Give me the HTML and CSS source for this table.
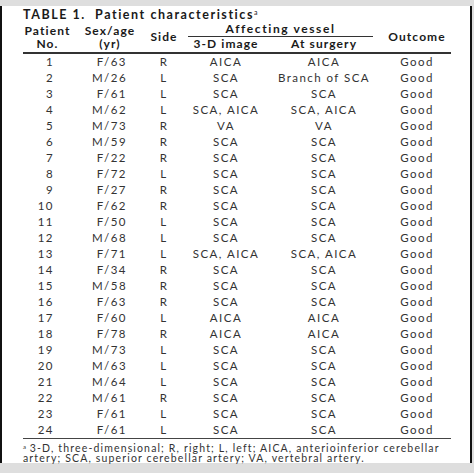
FILE: index.html
```html
<!DOCTYPE html>
<html>
<head>
<meta charset="utf-8">
<link rel="stylesheet" href="styles.css">
</head>
<body>
<div class="page">
  <div class="title">TABLE 1.&nbsp; Patient characteristics<sup>a</sup></div>
  <table class="tbl">
    <colgroup>
      <col class="c1"><col class="c2"><col class="c3"><col class="c4"><col class="c5"><col class="c6">
    </colgroup>
    <thead>
      <tr class="ha">
        <th rowspan="2">Patient<br>No.</th>
        <th rowspan="2">Sex/age<br>(yr)</th>
        <th rowspan="2">Side</th>
        <th colspan="2" class="grp"><div class="grp-in">Affecting vessel</div></th>
        <th rowspan="2" class="out">Outcome</th>
      </tr>
      <tr class="hb">
        <th>3-D image</th>
        <th>At surgery</th>
      </tr>
    </thead>
    <tbody>
      <tr><td class="n">1</td><td class="s">F/63</td><td>R</td><td>AICA</td><td>AICA</td><td class="o">Good</td></tr>
      <tr><td class="n">2</td><td class="s">M/26</td><td>L</td><td>SCA</td><td>Branch of SCA</td><td class="o">Good</td></tr>
      <tr><td class="n">3</td><td class="s">F/61</td><td>L</td><td>SCA</td><td>SCA</td><td class="o">Good</td></tr>
      <tr><td class="n">4</td><td class="s">M/62</td><td>L</td><td>SCA, AICA</td><td>SCA, AICA</td><td class="o">Good</td></tr>
      <tr><td class="n">5</td><td class="s">M/73</td><td>R</td><td>VA</td><td>VA</td><td class="o">Good</td></tr>
      <tr><td class="n">6</td><td class="s">M/59</td><td>R</td><td>SCA</td><td>SCA</td><td class="o">Good</td></tr>
      <tr><td class="n">7</td><td class="s">F/22</td><td>R</td><td>SCA</td><td>SCA</td><td class="o">Good</td></tr>
      <tr><td class="n">8</td><td class="s">F/72</td><td>L</td><td>SCA</td><td>SCA</td><td class="o">Good</td></tr>
      <tr><td class="n">9</td><td class="s">F/27</td><td>R</td><td>SCA</td><td>SCA</td><td class="o">Good</td></tr>
      <tr><td class="n">10</td><td class="s">F/62</td><td>R</td><td>SCA</td><td>SCA</td><td class="o">Good</td></tr>
      <tr><td class="n">11</td><td class="s">F/50</td><td>L</td><td>SCA</td><td>SCA</td><td class="o">Good</td></tr>
      <tr><td class="n">12</td><td class="s">M/68</td><td>L</td><td>SCA</td><td>SCA</td><td class="o">Good</td></tr>
      <tr><td class="n">13</td><td class="s">F/71</td><td>L</td><td>SCA, AICA</td><td>SCA, AICA</td><td class="o">Good</td></tr>
      <tr><td class="n">14</td><td class="s">F/34</td><td>R</td><td>SCA</td><td>SCA</td><td class="o">Good</td></tr>
      <tr><td class="n">15</td><td class="s">M/58</td><td>R</td><td>SCA</td><td>SCA</td><td class="o">Good</td></tr>
      <tr><td class="n">16</td><td class="s">F/63</td><td>R</td><td>SCA</td><td>SCA</td><td class="o">Good</td></tr>
      <tr><td class="n">17</td><td class="s">F/60</td><td>L</td><td>AICA</td><td>AICA</td><td class="o">Good</td></tr>
      <tr><td class="n">18</td><td class="s">F/78</td><td>R</td><td>AICA</td><td>AICA</td><td class="o">Good</td></tr>
      <tr><td class="n">19</td><td class="s">M/73</td><td>L</td><td>SCA</td><td>SCA</td><td class="o">Good</td></tr>
      <tr><td class="n">20</td><td class="s">M/63</td><td>L</td><td>SCA</td><td>SCA</td><td class="o">Good</td></tr>
      <tr><td class="n">21</td><td class="s">M/64</td><td>L</td><td>SCA</td><td>SCA</td><td class="o">Good</td></tr>
      <tr><td class="n">22</td><td class="s">M/61</td><td>R</td><td>SCA</td><td>SCA</td><td class="o">Good</td></tr>
      <tr><td class="n">23</td><td class="s">F/61</td><td>L</td><td>SCA</td><td>SCA</td><td class="o">Good</td></tr>
      <tr><td class="n">24</td><td class="s">F/61</td><td>L</td><td>SCA</td><td>SCA</td><td class="o">Good</td></tr>
    </tbody>
  </table>
  <div class="foot"><sup>a</sup> 3-D, three-dimensional; R, right; L, left; AICA, anterioinferior cerebellar artery; SCA, superior cerebellar artery; VA, vertebral artery.</div>
</div>
</body>
</html>
```

FILE: styles.css
```css
html, body {
  margin: 0;
  padding: 0;
}
body {
  background: #dedede;
  width: 474px;
  height: 473px;
  overflow: hidden;
}
.page {
  margin-top: 6px;
  height: 457px;
  width: 472px;
  background: #ffffff;
  border-left: 2px solid #111;
  border-right: 2px solid #111;
  padding: 2px 0 0 21px;
  box-sizing: border-box;
  font-family: Lato, "Open Sans", sans-serif;
  color: #2a2a2a;
}
.title {
  font-weight: 700;
  font-size: 12.5px;
  line-height: 13px;
  letter-spacing: 1.55px;
  color: #1a1a1a;
}
.title sup {
  font-size: 7px;
  font-weight: 400;
  vertical-align: 4px;
  line-height: 0;
  letter-spacing: 0;
}
.tbl {
  border-collapse: collapse;
  width: 428px;
  table-layout: fixed;
}
.c1 { width: 49px; }
.c2 { width: 76px; }
.c3 { width: 32px; }
.c4 { width: 92px; }
.c5 { width: 104px; }
.c6 { width: 75px; }
.tbl th {
  font-weight: 700;
  font-size: 12px;
  line-height: 13px;
  letter-spacing: 1.1px;
  color: #1a1a1a;
  text-align: center;
  vertical-align: middle;
  padding: 0;
}
.tbl thead tr.ha th[rowspan] {
  line-height: 13px;
  border-bottom: 2px solid #333;
}
.tbl thead tr.hb th {
  padding: 0 0 2px 0;
  border-bottom: 2px solid #333;
}
.tbl th.grp {
  padding: 1px 3px 0 8px;
}
.grp-in {
  border-bottom: 1.5px solid #333;
  padding-bottom: 1px;
  letter-spacing: 1.6px;
}
.tbl th.out {
  padding-left: 7px;
}
.tbl td {
  height: 16px;
  padding: 0;
  font-size: 11.5px;
  line-height: 16px;
  letter-spacing: 1.45px;
  text-align: center;
  color: #333;
}
.tbl tbody tr:last-child td {
  border-bottom: 1px solid #444;
}
.tbl td.n {
  text-align: right;
  padding-right: 18px;
}
.tbl td.s {
  text-align: right;
  padding-right: 21px;
}
.tbl td.o {
  padding-left: 7px;
}
.foot {
  width: 428px;
  font-size: 10.5px;
  line-height: 10px;
  letter-spacing: 1.15px;
  color: #333;
  padding-top: 4px;
}
.foot sup {
  font-size: 6px;
  vertical-align: 3px;
  line-height: 0;
  letter-spacing: 0;
}
```
